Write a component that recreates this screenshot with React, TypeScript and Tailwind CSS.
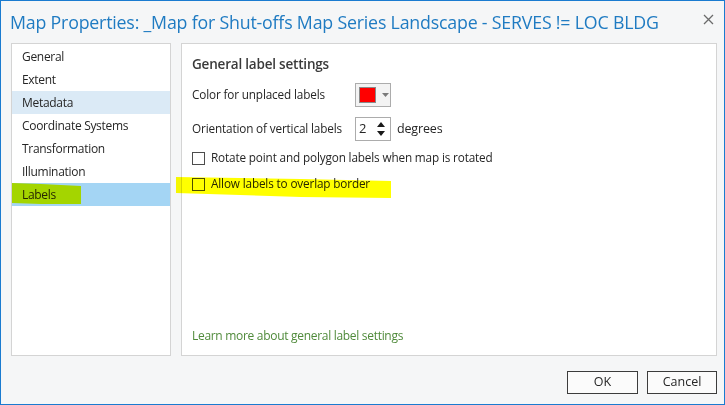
const navItems = [
  'General',
  'Extent',
  'Metadata',
  'Coordinate Systems',
  'Transformation',
  'Illumination',
  'Labels',
]

const font = { fontFamily: '"Open Sans", "Noto Sans", sans-serif' }

const Checkbox = () => (
  <span className="w-[13px] h-[13px] border border-[#4d4d4d] bg-white shrink-0" />
)

const App = () => {
  return (
    <div
      className="relative w-[725px] h-[405px] border border-[#1a7bd0] bg-[#f5f6f7] flex flex-col text-[#262626] overflow-hidden"
      style={font}
    >
      {/* Title bar */}
      <div className="h-[42px] shrink-0 flex items-center justify-between pl-[9px] pr-[10px]">
        <span className="text-[17.8px] text-[#1f7bc2] tracking-[-0.2px] whitespace-nowrap">
          Map Properties: _Map for Shut-offs Map Series Landscape - SERVES != LOC BLDG
        </span>
        <svg width="11" height="11" viewBox="0 0 11 11" className="mb-[6px]">
          <path d="M1 1 L10 10 M10 1 L1 10" stroke="#6b6b6b" strokeWidth="1.3" />
        </svg>
      </div>

      {/* Panels */}
      <div className="flex gap-[10px] pl-[10px] pr-[7px] h-[313px] shrink-0">
        <div className="w-[160px] border border-[#d4d4d4] bg-white pt-[1px]">
          {navItems.map((item) => (
            <div
              key={item}
              className={
                'h-[23px] flex items-center pl-[10px] text-[12px] tracking-[-0.3px] ' +
                (item === 'Metadata'
                  ? 'bg-[#dbeaf6]'
                  : item === 'Labels'
                    ? 'bg-[#a4d5f4]'
                    : '')
              }
            >
              {item}
            </div>
          ))}
        </div>

        <div className="flex-1 border border-[#d4d4d4] bg-white flex flex-col pl-[10px] pt-[10px] pb-[11px]">
          <div className="h-[20px] flex items-center text-[13.5px] font-semibold text-[#3a3a3a] tracking-[-0.2px]">
            General label settings
          </div>

          <div className="mt-[9px] h-[24px] flex items-center text-[11.75px] tracking-[-0.15px]">
            <span className="w-[163px]">Color for unplaced labels</span>
            <div className="w-[36px] h-[24px] border border-[#acacac] bg-[#f3f3f3] flex items-center pl-[3px] gap-[6px]">
              <span className="w-[17px] h-[16px] bg-[#ff0000] border border-[#8a8a8a]" />
              <svg width="7" height="4" viewBox="0 0 7 4">
                <path d="M0 0 L7 0 L3.5 4 Z" fill="#7a7a7a" />
              </svg>
            </div>
          </div>

          <div className="mt-[10px] h-[24px] flex items-center text-[11.75px] tracking-[-0.15px]">
            <span className="w-[163px]">Orientation of vertical labels</span>
            <div className="w-[36px] h-[24px] border border-[#acacac] bg-white flex items-center justify-between pl-[3px] pr-[5px]">
              <span className="text-[13px]">2</span>
              <svg width="8" height="16" viewBox="0 0 8 16">
                <path d="M0 6 L8 6 L4 1 Z M0 10 L8 10 L4 15 Z" fill="#1a1a1a" />
              </svg>
            </div>
            <span className="ml-[6px] text-[12.5px]">degrees</span>
          </div>

          <div className="mt-[8px] h-[18px] flex items-center gap-[6px] text-[11.75px] tracking-[-0.15px]">
            <Checkbox />
            <span>Rotate point and polygon labels when map is rotated</span>
          </div>

          <div className="mt-[8px] h-[18px] flex items-center gap-[6px] text-[11.75px] tracking-[-0.15px]">
            <Checkbox />
            <span>Allow labels to overlap border</span>
          </div>

          <div className="mt-auto h-[16px] flex items-center text-[12px] text-[#4f8a3a] tracking-[-0.3px]">
            Learn more about general label settings
          </div>
        </div>
      </div>

      {/* Footer buttons */}
      <div className="flex justify-end gap-[9px] pr-[7px] mt-[15px]">
        <button className="w-[71px] h-[23px] border border-[#3c3c3c] bg-[#fbfbfb] text-[12.5px]">
          OK
        </button>
        <button className="w-[70px] h-[23px] border border-[#3c3c3c] bg-[#fbfbfb] text-[12.5px]">
          Cancel
        </button>
      </div>

      {/* Highlighter marks */}
      <svg
        className="absolute left-0 top-0 pointer-events-none mix-blend-multiply"
        width="725"
        height="405"
        viewBox="0 0 725 405"
      >
        <polygon points="11,182 40,183 80,185 80,203 40,203 11,202" fill="#ffff00" />
        <polygon points="175,176 300,178 390,180 390,197 300,196 175,192" fill="#ffff00" />
      </svg>
    </div>
  )
}

export default App
